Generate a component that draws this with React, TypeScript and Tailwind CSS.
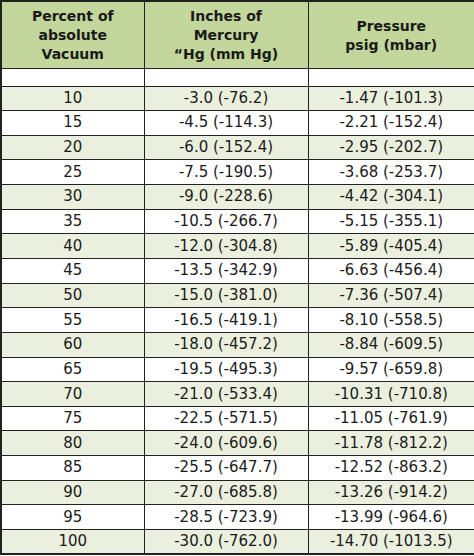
const rows: [string, string, string][] = [
  ["10", "-3.0 (-76.2)", "-1.47 (-101.3)"],
  ["15", "-4.5 (-114.3)", "-2.21 (-152.4)"],
  ["20", "-6.0 (-152.4)", "-2.95 (-202.7)"],
  ["25", "-7.5 (-190.5)", "-3.68 (-253.7)"],
  ["30", "-9.0 (-228.6)", "-4.42 (-304.1)"],
  ["35", "-10.5 (-266.7)", "-5.15 (-355.1)"],
  ["40", "-12.0 (-304.8)", "-5.89 (-405.4)"],
  ["45", "-13.5 (-342.9)", "-6.63 (-456.4)"],
  ["50", "-15.0 (-381.0)", "-7.36 (-507.4)"],
  ["55", "-16.5 (-419.1)", "-8.10 (-558.5)"],
  ["60", "-18.0 (-457.2)", "-8.84 (-609.5)"],
  ["65", "-19.5 (-495.3)", "-9.57 (-659.8)"],
  ["70", "-21.0 (-533.4)", "-10.31 (-710.8)"],
  ["75", "-22.5 (-571.5)", "-11.05 (-761.9)"],
  ["80", "-24.0 (-609.6)", "-11.78 (-812.2)"],
  ["85", "-25.5 (-647.7)", "-12.52 (-863.2)"],
  ["90", "-27.0 (-685.8)", "-13.26 (-914.2)"],
  ["95", "-28.5 (-723.9)", "-13.99 (-964.6)"],
  ["100", "-30.0 (-762.0)", "-14.70 (-1013.5)"],
]

export default function App() {
  return (
    <div className="w-[474px] h-[556px] bg-white overflow-hidden" style={{ fontFamily: '"DejaVu Sans", Verdana, sans-serif' }}>
      <table className="w-[474px] table-fixed border-collapse border-2 border-[#222] text-[#1a1a1a]">
        <colgroup>
          <col className="w-[143px]" />
          <col className="w-[164px]" />
          <col className="w-[167px]" />
        </colgroup>
        <thead>
          <tr className="h-[67px] bg-[#c3d69b] text-[14px] font-bold leading-[19px]">
            <th className="border border-[#222] px-1 pt-[2px] align-middle">
              Percent of
              <br />
              absolute
              <br />
              Vacuum
            </th>
            <th className="border border-[#222] px-1 pt-[2px] align-middle">
              Inches of
              <br />
              Mercury
              <br />
              “Hg (mm Hg)
            </th>
            <th className="border border-[#222] px-1 pt-[2px] align-middle">
              Pressure
              <br />
              psig (mbar)
            </th>
          </tr>
        </thead>
        <tbody className="text-[15px] text-center">
          <tr className="h-[18px] bg-white">
            <td className="border border-[#222]"></td>
            <td className="border border-[#222]"></td>
            <td className="border border-[#222]"></td>
          </tr>
          {rows.map((r, i) => (
            <tr key={r[0]} className={i % 2 === 0 ? "h-[24.65px] bg-[#ebf0de]" : "h-[24.65px] bg-white"}>
              <td className="border border-[#222] p-0 leading-none">{r[0]}</td>
              <td className="border border-[#222] p-0 leading-none">{r[1]}</td>
              <td className="border border-[#222] p-0 leading-none">{r[2]}</td>
            </tr>
          ))}
        </tbody>
      </table>
    </div>
  )
}
